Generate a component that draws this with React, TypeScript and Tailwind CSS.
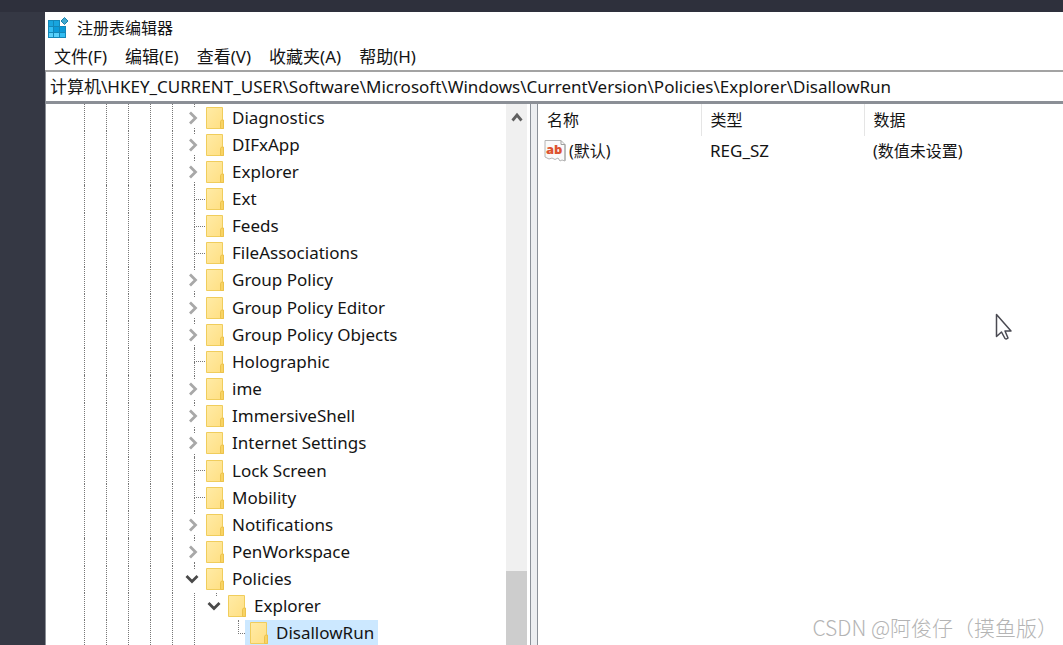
type Cell = "line" | "blank" | "branch" | "last" | "closed" | "open";

interface TreeNode {
  name: string;
  cell: Cell;
  parents?: Cell[];
  selected?: boolean;
}

const BASE: Cell[] = ["line", "line", "line", "line", "line"];

const NODES: TreeNode[] = [
  { name: "Diagnostics", cell: "closed" },
  { name: "DIFxApp", cell: "closed" },
  { name: "Explorer", cell: "closed" },
  { name: "Ext", cell: "branch" },
  { name: "Feeds", cell: "branch" },
  { name: "FileAssociations", cell: "branch" },
  { name: "Group Policy", cell: "closed" },
  { name: "Group Policy Editor", cell: "closed" },
  { name: "Group Policy Objects", cell: "closed" },
  { name: "Holographic", cell: "branch" },
  { name: "ime", cell: "closed" },
  { name: "ImmersiveShell", cell: "closed" },
  { name: "Internet Settings", cell: "closed" },
  { name: "Lock Screen", cell: "branch" },
  { name: "Mobility", cell: "branch" },
  { name: "Notifications", cell: "closed" },
  { name: "PenWorkspace", cell: "closed" },
  { name: "Policies", cell: "open" },
  { name: "Explorer", cell: "open", parents: ["line"] },
  { name: "DisallowRun", cell: "last", parents: ["line", "blank"], selected: true },
];

const MENU = ["文件(F)", "编辑(E)", "查看(V)", "收藏夹(A)", "帮助(H)"];

function RegeditIcon() {
  return (
    <svg width="22" height="22" viewBox="0 0 22 22" aria-hidden="true">
      <path d="M1 3h12v6h6v12H1z" fill="#1387b8" />
      <path d="M2 4h4v5H2zM7 4h5v5H7z" fill="#18a5de" />
      <path d="M2 10h4v5H2zM13 16h5v4h-5z" fill="#32bdf2" />
      <path d="M7 10h5v5H7zM13 10h5v5h-5z" fill="#0b9ad8" />
      <path d="M2 16h4v4H2zM7 16h5v4H7z" fill="#58d0fa" />
      <path d="M17.500 .5l3.500 3.500-3.500 3.500L14 4z" fill="#42a9cf" stroke="#1b83ad" />
    </svg>
  );
}

function FolderIcon() {
  return (
    <svg width="18" height="22" viewBox="0 0 18 22" className="shrink-0" aria-hidden="true">
      <defs>
        <linearGradient id="folder" x1="0" y1="0" x2="1" y2="1">
          <stop offset="0" stopColor="#ffeba6" />
          <stop offset="1" stopColor="#ffdf82" />
        </linearGradient>
      </defs>
      <path d="M.5.5h16v13h1v8H.5z" fill="url(#folder)" stroke="#f0cd5c" />
      <path d="M14.500 21.500v-7l1-1.500h2v8.500z" fill="#f8d363" stroke="#ecc24c" />
    </svg>
  );
}

function StringIcon() {
  return (
    <svg width="23" height="22" viewBox="0 0 23 22" className="shrink-0" aria-hidden="true">
      <path
        d="M1 .5h16l4 4v16.500l-3-1-2 1-2-3-3 1.500-3-1.500-3 1-4-2z"
        fill="#fafafa"
        stroke="#b4b4b4"
      />
      <path d="M17 .5v4h4v16" fill="none" stroke="#a0a0a0" />
      <text
        x="2"
        y="14"
        fontFamily="Open Sans, sans-serif"
        fontWeight="800"
        fontSize="13"
        fill="#dd5331"
      >
        ab
      </text>
    </svg>
  );
}

function Chevron({ kind }: { kind: "right" | "down" | "up" }) {
  const paths = {
    right: "M5 2.500l5.500 5.500L5 13.500",
    down: "M1.500 5L7 10.500 12.500 5",
    up: "M3.500 10.500L8 5l4.500 5.500",
  };
  const colors = { right: "#a8a8a8", down: "#4a4a4a", up: "#606060" };
  return (
    <svg width="16" height="16" viewBox="0 0 16 16" aria-hidden="true">
      <path d={paths[kind]} fill="none" stroke={colors[kind]} strokeWidth="2.800" />
    </svg>
  );
}

function TreeCell({ kind }: { kind: Cell }) {
  if (kind === "blank") return <span className="w-[22px] shrink-0" />;
  if (kind === "line") {
    return (
      <span className="w-[22px] shrink-0 pl-[11px] flex">
        <span className="border-l border-dotted border-[#777]" />
      </span>
    );
  }
  if (kind === "branch" || kind === "last") {
    return (
      <span className="w-[22px] shrink-0 pl-[11px] flex flex-col">
        <span className="flex-1 border-l border-b border-dotted border-[#777]" />
        <span
          className={
            kind === "branch" ? "flex-1 border-l border-dotted border-[#777]" : "flex-1"
          }
        />
      </span>
    );
  }
  return (
    <span className="w-[22px] shrink-0 flex flex-col items-center">
      <span className="flex-1 border-l border-dotted border-[#777]" />
      <span className="h-[21px] w-full pl-[2px] flex items-center">
        <Chevron kind={kind === "closed" ? "right" : "down"} />
      </span>
      <span
        className={kind === "closed" ? "flex-1 border-l border-dotted border-[#777]" : "flex-1"}
      />
    </span>
  );
}

function TreeRow({ node }: { node: TreeNode }) {
  const cells = [...BASE, ...(node.parents ?? []), node.cell];
  return (
    <li className="flex pl-[27px]">
      {cells.map((kind, i) => (
        <TreeCell key={i} kind={kind} />
      ))}
      <button
        type="button"
        className={
          node.selected
            ? "flex items-center gap-2 pl-[5px] pr-1 -ml-1 bg-[#cce8ff]"
            : "flex items-center gap-2 pl-[5px] pr-1 -ml-1"
        }
      >
        <FolderIcon />
        <span className="whitespace-nowrap">{node.name}</span>
      </button>
    </li>
  );
}

function KeyTree() {
  return (
    <nav className="w-[484px] shrink-0 flex overflow-hidden text-[17px]" aria-label="注册表项">
      <div className="flex-1 overflow-hidden">
        <ul className="h-[543px] grid auto-rows-fr">
          {NODES.map((node, i) => (
            <TreeRow key={i} node={node} />
          ))}
        </ul>
      </div>
      <div className="w-[21px] mr-[3px] flex flex-col bg-[#f0f0f0]">
        <button type="button" aria-label="向上滚动" className="h-7 flex items-center justify-center">
          <Chevron kind="up" />
        </button>
        <div className="flex-1" />
        <div className="h-[74px] bg-[#cdcdcd]" />
      </div>
    </nav>
  );
}

function ValueList() {
  return (
    <main className="flex-1 overflow-hidden">
      <table className="w-full table-fixed text-left">
        <colgroup>
          <col className="w-[163px]" />
          <col className="w-[163px]" />
          <col />
        </colgroup>
        <thead>
          <tr className="h-8">
            <th className="font-normal pl-[9px] border-r border-[#e5e5e5]">名称</th>
            <th className="font-normal pl-[9px] border-r border-[#e5e5e5]">类型</th>
            <th className="font-normal pl-[9px]">数据</th>
          </tr>
        </thead>
        <tbody>
          <tr className="h-[30px]">
            <td className="pl-[6px]">
              <span className="flex items-center gap-[2px]">
                <StringIcon />
                (默认)
              </span>
            </td>
            <td className="pl-[9px] text-[17px]">REG_SZ</td>
            <td className="pl-[9px]">(数值未设置)</td>
          </tr>
        </tbody>
      </table>
    </main>
  );
}

function Cursor() {
  return (
    <svg
      width="18"
      height="28"
      viewBox="0 0 18 28"
      className="absolute left-[995px] top-[313px]"
      aria-hidden="true"
    >
      <path
        d="M1.500 1.500v22l5-4.500 3.500 6.500q1.500 1 3-.5l-3-7h6z"
        fill="#fff"
        stroke="#4a4a52"
        strokeWidth="1.500"
        strokeLinejoin="round"
      />
    </svg>
  );
}

export default function App() {
  return (
    <div className="relative h-screen overflow-hidden flex flex-col bg-[#353844] pl-[45px] text-[#141414] text-[16px] leading-[22px] font-['Noto_Sans','Noto_Sans_CJK_SC',sans-serif]">
      <div className="h-3 shrink-0 -ml-[45px] bg-[#2e303c]" />
      <div className="flex-1 min-h-0 flex flex-col bg-white">
        <header className="h-[31px] shrink-0 flex items-center gap-2 pl-[2px]">
          <RegeditIcon />
          <h1>注册表编辑器</h1>
        </header>
        <div
          role="menubar"
          className="h-[27px] shrink-0 flex items-center gap-[18px] pl-[9px] text-[17px]"
        >
          {MENU.map((label) => (
            <button key={label} type="button" role="menuitem">
              {label}
            </button>
          ))}
        </div>
        <div className="h-[34px] shrink-0 flex border-t-2 border-b-3 border-l border-t-[#a3a3a3] border-b-[#8b8f96] border-l-[#8b8f96]">
          <input
            type="text"
            aria-label="地址"
            className="flex-1 pl-1 outline-none text-[17px]"
            defaultValue="计算机\HKEY_CURRENT_USER\Software\Microsoft\Windows\CurrentVersion\Policies\Explorer\DisallowRun"
          />
        </div>
        <div className="flex-1 min-h-0 flex border-l border-[#8b8f96]">
          <KeyTree />
          <div className="w-2 shrink-0 bg-[#eceef1] border-x border-[#8b9199]" />
          <ValueList />
        </div>
      </div>
      <Cursor />
      <p className="absolute right-[5px] bottom-1 text-[21px] leading-7 text-[#b4b4b4] font-light font-['Noto_Sans_CJK_SC',sans-serif]">
        CSDN @阿俊仔（摸鱼版）
      </p>
    </div>
  );
}
